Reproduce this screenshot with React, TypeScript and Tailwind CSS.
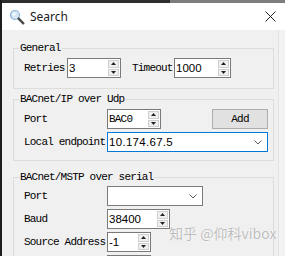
import React from "react";

const mono = "font-['Liberation_Mono',monospace] text-[11px] tracking-[-0.8px] text-black";
const sans = "font-['Liberation_Sans',Arial,sans-serif] text-[11.5px] text-black";

function Spin() {
  return (
    <div className="flex flex-col w-[11px] shrink-0 py-[1px] mr-[1px] gap-[1px]">
      <div className="flex-1 bg-[#f0f0f0] border border-[#cfcfcf] flex items-center justify-center">
        <svg width="5" height="3" viewBox="0 0 5 3">
          <path d="M2.5 0L5 3H0z" fill="#222" />
        </svg>
      </div>
      <div className="flex-1 bg-[#f0f0f0] border border-[#cfcfcf] flex items-center justify-center">
        <svg width="5" height="3" viewBox="0 0 5 3">
          <path d="M0 0H5L2.5 3z" fill="#222" />
        </svg>
      </div>
    </div>
  );
}

function SpinInput({ value, w, font }: { value: string; w: string; font: string }) {
  return (
    <div className={`flex h-[20px] bg-white border border-[#7a7a7a] shrink-0 ${w}`}>
      <span className={`flex-1 pl-[1px] leading-[18px] whitespace-nowrap ${font}`}>{value}</span>
      <Spin />
    </div>
  );
}

function Chevron() {
  return (
    <svg width="8" height="5" viewBox="0 0 8 5" className="shrink-0">
      <path d="M0.5 0.5L4 4L7.5 0.5" fill="none" stroke="#5a5a5a" strokeWidth="1" />
    </svg>
  );
}

function Combo({ value, w, border }: { value: string; w: string; border: string }) {
  return (
    <div className={`flex items-center h-[20px] bg-white border ${border} ${w}`}>
      <span className={`flex-1 pl-[1px] leading-[18px] tracking-[0.3px] ${sans}`}>{value}</span>
      <div className="w-[17px] flex justify-center pr-[2px]">
        <Chevron />
      </div>
    </div>
  );
}

function Row({ label, children }: { label: string; children: React.ReactNode }) {
  return (
    <div className="flex items-center h-[20px] pl-[5px]">
      <span className={`w-[83px] shrink-0 whitespace-nowrap ${mono}`}>{label}</span>
      {children}
    </div>
  );
}

export default function App() {
  return (
    <div className="relative w-[285px] h-[256px] overflow-hidden flex bg-[#f0f0f0]">
      <div className="w-[2px] shrink-0 bg-[#1e1e1e]" />
      <div className="flex-1 flex flex-col min-w-0">
        <div className="h-[3px] shrink-0 flex bg-[#2d2d2d]">
          <div className="w-[168px]" />
          <div className="flex-1 bg-[#7d7d7d]" />
        </div>
        <div className="h-[27px] shrink-0 bg-white flex items-center pl-[7px] pr-[9px]">
          <svg width="16" height="16" viewBox="0 0 16 16" className="shrink-0">
            <circle cx="6" cy="6" r="4.5" fill="#d6e8f7" stroke="#8fb3d6" strokeWidth="1.2" />
            <circle cx="5" cy="5" r="1.6" fill="#ffffff" opacity="0.8" />
            <line x1="9.6" y1="9.6" x2="14.3" y2="14.3" stroke="#4a4a4a" strokeWidth="2.4" strokeLinecap="round" />
          </svg>
          <span className="ml-[5px] font-['Noto_Sans',sans-serif] text-[12px] text-[#1a1a1a] leading-none">Search</span>
          <svg width="11" height="11" viewBox="0 0 11 11" className="ml-auto">
            <path d="M0.5 0.5L10.5 10.5M10.5 0.5L0.5 10.5" stroke="#222" strokeWidth="1" />
          </svg>
        </div>
        <div className="flex-1 flex min-h-0">
          <div className="w-[276px] shrink-0 flex flex-col pt-[12px] pl-[11px]">
            <fieldset className="w-[261px] border border-[#dcdcdc] px-[5px] pt-[4px] pb-[10px]">
              <legend className={`px-[1px] leading-[12px] ${mono}`}>General</legend>
              <div className="flex items-center h-[20px] pl-[5px]">
                <span className={`w-[43px] shrink-0 ${mono}`}>Retries</span>
                <SpinInput value="3" w="w-[54px]" font={sans} />
                <span className={`ml-[11px] w-[42px] shrink-0 ${mono}`}>Timeout</span>
                <SpinInput value="1000" w="w-[57px]" font={sans} />
              </div>
            </fieldset>
            <fieldset className="mt-[4px] w-[261px] border border-[#dcdcdc] px-[5px] pt-[4px] pb-[8px] flex flex-col gap-[3px]">
              <legend className={`px-[1px] leading-[12px] ${mono}`}>BACnet/IP over Udp</legend>
              <Row label="Port">
                <SpinInput value="BAC0" w="w-[54px]" font={mono} />
                <button className={`ml-auto w-[56px] h-[20px] bg-[#e1e1e1] border border-[#adadad] ${mono}`}>Add</button>
              </Row>
              <Row label="Local endpoint">
                <Combo value="10.174.67.5" w="flex-1" border="border-[#0078d7]" />
              </Row>
            </fieldset>
            <fieldset className="mt-[10px] w-[261px] border border-[#dcdcdc] px-[5px] pt-[3px] pb-[8px] flex flex-col gap-[3px]">
              <legend className={`px-[1px] leading-[12px] ${mono}`}>BACnet/MSTP over serial</legend>
              <Row label="Port">
                <Combo value="" w="w-[96px]" border="border-[#7a7a7a]" />
              </Row>
              <Row label="Baud">
                <SpinInput value="38400" w="w-[63px]" font={sans} />
              </Row>
              <Row label="Source Address">
                <SpinInput value="-1" w="w-[44px]" font={sans} />
              </Row>
              <Row label="">
                <SpinInput value="" w="w-[44px]" font={sans} />
              </Row>
            </fieldset>
          </div>
          <div className="flex-1 border-l border-[#e2e2e2] bg-[#f3f3f3]" />
        </div>
      </div>
      <div className="absolute left-[169px] top-[224px] font-['Noto_Sans_CJK_SC',sans-serif] text-[14px] leading-[18px] text-[#bdbdbd] whitespace-nowrap [text-shadow:0_0_1px_#ffffff,0_0_1px_#ffffff]">
        知乎 @仰科vibox
      </div>
    </div>
  );
}
